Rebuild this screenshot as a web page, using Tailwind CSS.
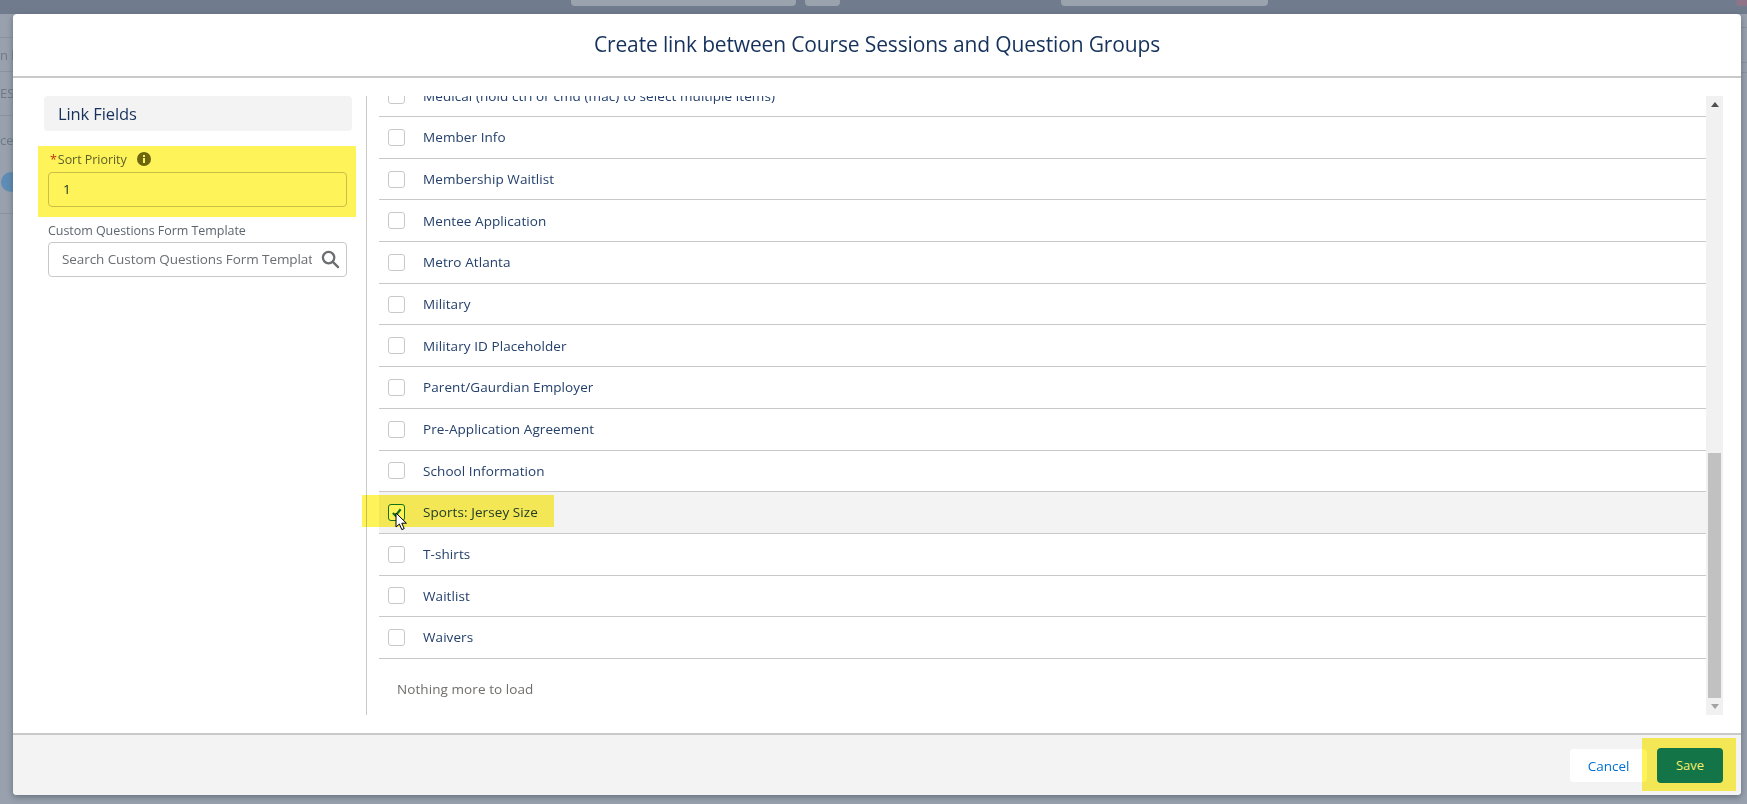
<!DOCTYPE html>
<html lang="en">
<head>
  <meta charset="UTF-8" />
  <title>Create link between Course Sessions and Question Groups</title>
  <script src="https://cdn.jsdelivr.net/npm/@tailwindcss/browser@4"></script>
</head>
<body class="h-[804px] w-[1747px] overflow-hidden bg-[#98a1ad] font-['Open_Sans',sans-serif]">
  <!-- Page behind the overlay -->
  <div class="absolute inset-0 text-[#6f7a88] text-[13px]">
    <div class="h-[14px] bg-[#707c8d] relative">
      <div class="absolute left-[571px] top-0 h-[6px] w-[225px] rounded-b bg-[#99a2ad]"></div>
      <div class="absolute left-[805px] top-0 h-[6px] w-[35px] rounded-b bg-[#99a2ad]"></div>
      <div class="absolute left-[1061px] top-0 h-[6px] w-[207px] rounded-b bg-[#99a2ad]"></div>
      <div class="absolute left-[1736px] top-0 h-[6px] w-[11px] rounded-bl bg-[#8f7489]"></div>
    </div>
    <div class="absolute left-0 top-[37px] h-px w-[13px] bg-[#8a94a1]"></div>
    <div class="absolute left-0 top-[71px] h-px w-[13px] bg-[#8a94a1]"></div>
    <div class="absolute left-0 top-[115px] h-px w-[13px] bg-[#8a94a1]"></div>
    <div class="absolute left-0 top-[213px] h-px w-[13px] bg-[#8a94a1]"></div>
    <span class="absolute left-0 top-[46px] w-[13px] overflow-hidden whitespace-nowrap">n k</span>
    <span class="absolute left-0 top-[84px] w-[13px] overflow-hidden whitespace-nowrap">ES</span>
    <span class="absolute left-0 top-[131px] w-[13px] overflow-hidden whitespace-nowrap">ce</span>
    <div class="absolute left-[1px] top-[172px] h-[20px] w-[20px] rounded-full bg-[#5f8db5]"></div>
    <div class="absolute right-0 top-[27px] h-px w-[6px] bg-[#8a94a1]"></div>
    <div class="absolute right-0 top-[62px] h-px w-[6px] bg-[#8a94a1]"></div>
    <div class="absolute right-0 top-[72px] h-px w-[6px] bg-[#8a94a1]"></div>
  </div>

  <!-- Modal -->
  <div class="relative ml-[13px] mt-[14px] flex h-[781px] w-[1728px] flex-col rounded bg-white shadow-[0_2px_6px_rgba(60,70,85,0.55)]">
    <header class="flex h-[64px] shrink-0 items-center justify-center border-b-2 border-[#c9c9c9]">
      <h1 class="text-[21px] tracking-[-0.15px] text-[#16325c]">Create link between Course Sessions and Question Groups</h1>
    </header>

    <div class="flex min-h-0 flex-1 pt-[18px]">
      <!-- Link fields -->
      <aside class="h-[619px] w-[353px] shrink-0 pl-[31px]">
        <h2 class="flex h-[35px] w-[308px] items-center rounded bg-[#f3f3f3] pl-[14px] pt-[1px] text-[16.5px] tracking-[-0.1px] text-[#16325c]">Link Fields</h2>
        <div class="ml-[4px] w-[299px]">
          <label class="mt-[20px] flex h-[18px] items-center text-[12.5px] tracking-[-0.05px] text-[#5c6670]">
            <span class="ml-[2px] mr-[1px] text-[#c23934]">*</span>Sort Priority
            <svg class="ml-[10px] -mt-[3px] h-[14px] w-[14px]" viewBox="0 0 14 14">
              <circle cx="7" cy="7" r="7" fill="#6b6a2c"/>
              <rect x="6" y="6" width="2" height="5" fill="#fff"/>
              <rect x="6" y="3" width="2" height="2" fill="#fff"/>
            </svg>
          </label>
          <div class="mt-[3px] flex h-[35px] items-center rounded border border-[#c9c9c9] bg-white pl-[14px] text-[13.5px] text-[#16325c]">1</div>
          <label class="mt-[15px] block h-[20px] text-[12.5px] tracking-[-0.05px] text-[#5c6670]">Custom Questions Form Template</label>
          <div class="flex h-[35px] items-center rounded border border-[#c9c9c9] bg-white pl-[13px] pr-[6px]">
            <span class="w-[250px] overflow-hidden whitespace-nowrap text-[13.5px] tracking-[-0.08px] text-[#6b6d70]">Search Custom Questions Form Template</span>
            <svg class="ml-auto h-[19px] w-[19px] text-[#6b6d70]" viewBox="0 0 20 20" fill="none" stroke="currentColor" stroke-width="2.4">
              <circle cx="8" cy="8" r="6"/>
              <path d="M12.5 12.5L18 18" stroke-linecap="round"/>
            </svg>
          </div>
        </div>
      </aside>

      <!-- Question group list -->
      <div class="flex h-[619px] min-w-0 flex-1 border-l border-[#c9c9c9] pl-[12px] pr-[18px]">
        <div class="min-w-0 flex-1 overflow-hidden">
          <ul class="-mt-[20.7px] text-[13.5px] tracking-[0.08px] text-[#24406b]">
            <li class="flex h-[41.7px] items-center border-b border-[#c9c9c9]"><span class="ml-[9px] mr-[18px] h-[17px] w-[17px] rounded-[3px] border border-[#c9c9c9]"></span>Medical (hold ctrl or cmd (mac) to select multiple items)</li>
            <li class="flex h-[41.7px] items-center border-b border-[#c9c9c9]"><span class="ml-[9px] mr-[18px] h-[17px] w-[17px] rounded-[3px] border border-[#c9c9c9]"></span>Member Info</li>
            <li class="flex h-[41.7px] items-center border-b border-[#c9c9c9]"><span class="ml-[9px] mr-[18px] h-[17px] w-[17px] rounded-[3px] border border-[#c9c9c9]"></span>Membership Waitlist</li>
            <li class="flex h-[41.7px] items-center border-b border-[#c9c9c9]"><span class="ml-[9px] mr-[18px] h-[17px] w-[17px] rounded-[3px] border border-[#c9c9c9]"></span>Mentee Application</li>
            <li class="flex h-[41.7px] items-center border-b border-[#c9c9c9]"><span class="ml-[9px] mr-[18px] h-[17px] w-[17px] rounded-[3px] border border-[#c9c9c9]"></span>Metro Atlanta</li>
            <li class="flex h-[41.7px] items-center border-b border-[#c9c9c9]"><span class="ml-[9px] mr-[18px] h-[17px] w-[17px] rounded-[3px] border border-[#c9c9c9]"></span>Military</li>
            <li class="flex h-[41.7px] items-center border-b border-[#c9c9c9]"><span class="ml-[9px] mr-[18px] h-[17px] w-[17px] rounded-[3px] border border-[#c9c9c9]"></span>Military ID Placeholder</li>
            <li class="flex h-[41.7px] items-center border-b border-[#c9c9c9]"><span class="ml-[9px] mr-[18px] h-[17px] w-[17px] rounded-[3px] border border-[#c9c9c9]"></span>Parent/Gaurdian Employer</li>
            <li class="flex h-[41.7px] items-center border-b border-[#c9c9c9]"><span class="ml-[9px] mr-[18px] h-[17px] w-[17px] rounded-[3px] border border-[#c9c9c9]"></span>Pre-Application Agreement</li>
            <li class="flex h-[41.7px] items-center border-b border-[#c9c9c9]"><span class="ml-[9px] mr-[18px] h-[17px] w-[17px] rounded-[3px] border border-[#c9c9c9]"></span>School Information</li>
            <li class="flex h-[41.7px] items-center border-b border-[#c9c9c9] bg-[#f3f3f3]">
              <span class="ml-[9px] mr-[18px] flex h-[17px] w-[17px] items-center justify-center rounded-[3px] border border-[#137547] bg-white">
                <svg class="h-[11px] w-[11px]" viewBox="0 0 12 12" fill="none" stroke="#137547" stroke-width="2.4"><path d="M2 6.5L5 9.5L10.5 2.5"/></svg>
              </span>Sports: Jersey Size</li>
            <li class="flex h-[41.7px] items-center border-b border-[#c9c9c9]"><span class="ml-[9px] mr-[18px] h-[17px] w-[17px] rounded-[3px] border border-[#c9c9c9]"></span>T-shirts</li>
            <li class="flex h-[41.7px] items-center border-b border-[#c9c9c9]"><span class="ml-[9px] mr-[18px] h-[17px] w-[17px] rounded-[3px] border border-[#c9c9c9]"></span>Waitlist</li>
            <li class="flex h-[41.7px] items-center border-b border-[#c9c9c9]"><span class="ml-[9px] mr-[18px] h-[17px] w-[17px] rounded-[3px] border border-[#c9c9c9]"></span>Waivers</li>
          </ul>
          <p class="mt-[20px] pl-[18px] text-[13.5px] tracking-[0.08px] text-[#706e6b]">Nothing more to load</p>
        </div>
        <!-- Scrollbar -->
        <div class="flex w-[17px] shrink-0 flex-col items-center bg-[#f1f1f1]">
          <div class="flex h-[17px] w-full shrink-0 items-center justify-center">
            <div class="h-0 w-0 border-x-[4px] border-b-[5px] border-x-transparent border-b-[#505050]"></div>
          </div>
          <div class="mt-[340px] h-[245px] w-[13px] bg-[#c1c1c1]"></div>
          <div class="flex h-[17px] w-full shrink-0 items-center justify-center">
            <div class="h-0 w-0 border-x-[4px] border-t-[5px] border-x-transparent border-t-[#a3a3a3]"></div>
          </div>
        </div>
      </div>
    </div>

    <footer class="flex h-[62px] shrink-0 items-center justify-end gap-[10px] rounded-b border-t-2 border-[#c9c9c9] bg-[#f3f3f3] pr-[18px]">
      <button class="h-[33px] w-[77px] rounded bg-white pt-[2px] text-[13.5px] text-[#0070d2]">Cancel</button>
      <button class="relative z-20 h-[35px] w-[66px] rounded bg-[#137547] pt-[2px] text-[13px] text-[#f7f06a]">Save</button>
    </footer>
  </div>

  <!-- Yellow highlights drawn over the screenshot -->
  <div class="absolute left-[38px] top-[146px] h-[71px] w-[318px] bg-[#fff35a] mix-blend-multiply"></div>
  <div class="absolute left-[362px] top-[495px] h-[32px] w-[192px] bg-[#fff35a] mix-blend-multiply"></div>
  <div class="absolute left-[1642px] top-[738px] z-10 h-[53px] w-[94px] bg-[#fff35a] mix-blend-multiply"></div>

  <!-- Mouse pointer -->
  <svg class="absolute left-[395px] top-[512px] z-30 h-[19px] w-[13px]" viewBox="0 0 13 19">
    <path d="M1 1V15L4.4 12L6.8 17.6L9.2 16.6L6.8 11.2H11.4Z" fill="#fff" stroke="#000" stroke-width="1"/>
  </svg>
</body>
</html>
